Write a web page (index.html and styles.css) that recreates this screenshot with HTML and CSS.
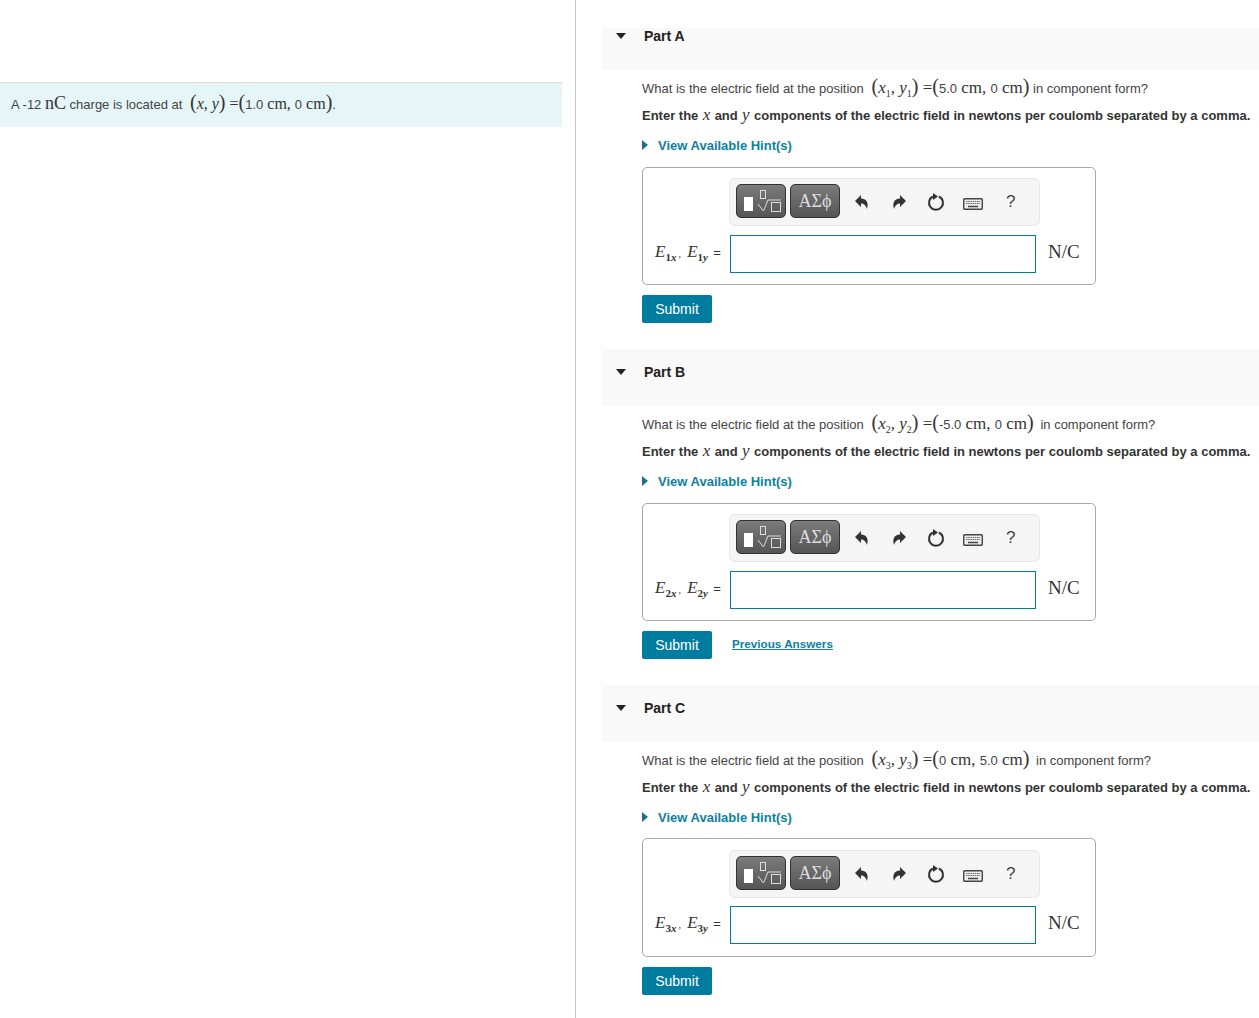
FILE: index.html
```html
<!DOCTYPE html>
<html lang="en">

<head>
  <meta charset="UTF-8">
  <title>Electric field of a point charge</title>
  <link rel="stylesheet" href="styles.css">
</head>

<body>
  <svg class="icon-defs" width="0" height="0">
    <symbol id="i-templates" viewBox="0 0 48 32">
      <rect x="7" y="12" width="9" height="14" fill="#fff"/>
      <rect x="23.500" y="5.500" width="5" height="8" fill="none" stroke="#ddd"/>
      <path d="M21 19l5.500 7 4.500-11h13" fill="none" stroke="#ddd"/>
      <rect x="34.500" y="17.500" width="9" height="9" fill="none" stroke="#ddd"/>
    </symbol>
    <symbol id="i-undo" viewBox="0 0 16 16">
      <path d="M1 7l6-6v3.500c5 0 8 3.500 6 10.500-1-3.500-3-5.500-6-5.500V13z" fill="#333"/>
    </symbol>
    <symbol id="i-redo" viewBox="0 0 16 16">
      <path d="M15 7L9 1v3.500c-5 0-8 3.500-6 10.500 1-3.500 3-5.500 6-5.500V13z" fill="#333"/>
    </symbol>
    <symbol id="i-reset" viewBox="0 0 20 20">
      <path d="M7 4.500a7 7 0 1 0 6 0" fill="none" stroke="#333" stroke-width="2"/>
      <path d="M7 1l5 3.500L7 8z" fill="#333"/>
    </symbol>
    <symbol id="i-keyboard" viewBox="0 0 20 12">
      <rect x=".7" y=".7" width="18.600" height="10.600" rx="1" fill="#eee" stroke="#444" stroke-width="1.400"/>
      <path d="M3 3.500h14M3 5.500h14" stroke="#666" stroke-dasharray="1.500 .7"/>
      <path d="M5 8.500h10" stroke="#444" stroke-width="1.500"/>
    </symbol>
  </svg>

  <div class="page">
    <div class="left">
      <div class="intro">A -12 <span class="math big">nC</span> charge is located at <span class="math gap"><span class="paren">(</span><i>x</i>, <i>y</i><span class="paren">)</span> =<span class="paren">(</span><span class="num">1.0</span> cm, <span class="num">0</span> cm<span class="paren">)</span></span>.</div>
    </div>

    <div class="right">
      <!-- Part A -->
      <div class="part-head first">
        <span class="caret"></span>
        <span class="part-title">Part A</span>
      </div>
      <div class="part-body">
        <p class="prompt">What is the electric field at the position <span class="math gap"><span class="paren">(</span><i>x</i><sub>1</sub>, <i>y</i><sub>1</sub><span class="paren">)</span> =<span class="paren">(</span><span class="num">5.0</span> cm, <span class="num">0</span> cm<span class="paren">)</span></span> in component form?</p>
        <p class="enter">Enter the <i class="math">x</i> and <i class="math">y</i> components of the electric field in newtons per coulomb separated by a comma.</p>
        <div class="hint"><span class="hint-arrow"></span>View Available Hint(s)</div>
        <div class="answer-box">
          <div class="toolbar">
            <button class="tool-btn"><svg width="48" height="32"><use href="#i-templates"/></svg></button>
            <button class="tool-btn greek">ΑΣϕ</button>
            <span class="tool-icon"><svg width="16" height="16"><use href="#i-undo"/></svg></span>
            <span class="tool-icon"><svg width="16" height="16"><use href="#i-redo"/></svg></span>
            <span class="tool-icon"><svg width="20" height="20"><use href="#i-reset"/></svg></span>
            <span class="tool-icon keyboard"><svg width="20" height="12"><use href="#i-keyboard"/></svg></span>
            <span class="tool-icon help">?</span>
          </div>
          <div class="answer-row">
            <span class="answer-label"><i>E</i><sub>1<i>x</i></sub><span class="comma">,</span> <i>E</i><sub>1<i>y</i></sub> <span class="eq">=</span></span>
            <input class="answer-input" type="text">
            <span class="unit">N/C</span>
          </div>
        </div>
        <div class="actions">
          <button class="submit">Submit</button>
        </div>
      </div>

      <!-- Part B -->
      <div class="part-head">
        <span class="caret"></span>
        <span class="part-title">Part B</span>
      </div>
      <div class="part-body">
        <p class="prompt">What is the electric field at the position <span class="math gap"><span class="paren">(</span><i>x</i><sub>2</sub>, <i>y</i><sub>2</sub><span class="paren">)</span> =<span class="paren">(</span><span class="num">-5.0</span> cm, <span class="num">0</span> cm<span class="paren">)</span></span> <span class="after">in component form?</span></p>
        <p class="enter">Enter the <i class="math">x</i> and <i class="math">y</i> components of the electric field in newtons per coulomb separated by a comma.</p>
        <div class="hint"><span class="hint-arrow"></span>View Available Hint(s)</div>
        <div class="answer-box">
          <div class="toolbar">
            <button class="tool-btn"><svg width="48" height="32"><use href="#i-templates"/></svg></button>
            <button class="tool-btn greek">ΑΣϕ</button>
            <span class="tool-icon"><svg width="16" height="16"><use href="#i-undo"/></svg></span>
            <span class="tool-icon"><svg width="16" height="16"><use href="#i-redo"/></svg></span>
            <span class="tool-icon"><svg width="20" height="20"><use href="#i-reset"/></svg></span>
            <span class="tool-icon keyboard"><svg width="20" height="12"><use href="#i-keyboard"/></svg></span>
            <span class="tool-icon help">?</span>
          </div>
          <div class="answer-row">
            <span class="answer-label"><i>E</i><sub>2<i>x</i></sub><span class="comma">,</span> <i>E</i><sub>2<i>y</i></sub> <span class="eq">=</span></span>
            <input class="answer-input" type="text">
            <span class="unit">N/C</span>
          </div>
        </div>
        <div class="actions">
          <button class="submit">Submit</button>
          <a class="prev-answers" href="#">Previous Answers</a>
        </div>
      </div>

      <!-- Part C -->
      <div class="part-head">
        <span class="caret"></span>
        <span class="part-title">Part C</span>
      </div>
      <div class="part-body">
        <p class="prompt">What is the electric field at the position <span class="math gap"><span class="paren">(</span><i>x</i><sub>3</sub>, <i>y</i><sub>3</sub><span class="paren">)</span> =<span class="paren">(</span><span class="num">0</span> cm, <span class="num">5.0</span> cm<span class="paren">)</span></span> <span class="after">in component form?</span></p>
        <p class="enter">Enter the <i class="math">x</i> and <i class="math">y</i> components of the electric field in newtons per coulomb separated by a comma.</p>
        <div class="hint"><span class="hint-arrow"></span>View Available Hint(s)</div>
        <div class="answer-box tall">
          <div class="toolbar">
            <button class="tool-btn"><svg width="48" height="32"><use href="#i-templates"/></svg></button>
            <button class="tool-btn greek">ΑΣϕ</button>
            <span class="tool-icon"><svg width="16" height="16"><use href="#i-undo"/></svg></span>
            <span class="tool-icon"><svg width="16" height="16"><use href="#i-redo"/></svg></span>
            <span class="tool-icon"><svg width="20" height="20"><use href="#i-reset"/></svg></span>
            <span class="tool-icon keyboard"><svg width="20" height="12"><use href="#i-keyboard"/></svg></span>
            <span class="tool-icon help">?</span>
          </div>
          <div class="answer-row">
            <span class="answer-label"><i>E</i><sub>3<i>x</i></sub><span class="comma">,</span> <i>E</i><sub>3<i>y</i></sub> <span class="eq">=</span></span>
            <input class="answer-input" type="text">
            <span class="unit">N/C</span>
          </div>
        </div>
        <div class="actions">
          <button class="submit">Submit</button>
        </div>
      </div>
    </div>
  </div>
</body>

</html>
```

FILE: styles.css
```css
* {
  box-sizing: border-box;
}

html,
body {
  margin: 0;
  height: 100%;
  overflow: hidden;
  background: #fff;
}

body {
  font-family: "Liberation Sans", Arial, sans-serif;
  font-size: 13px;
  color: #444;
}

.icon-defs {
  position: absolute;
}

.page {
  display: flex;
  height: 1018px;
}

.left {
  width: 576px;
  padding: 82px 13px 0 0;
  border-right: 1px solid #c8c8c8;
  flex-shrink: 0;
}

.intro {
  height: 45px;
  padding-left: 11px;
  line-height: 41px;
  white-space: nowrap;
  background: #e6f5f7;
  border-top: 1px solid #dcdcdc;
}

.intro .math.gap {
  font-size: 16px;
}

.right {
  flex: 1;
  padding: 28px 0 0 26px;
  min-width: 0;
}

.math {
  font-family: "Liberation Serif", "DejaVu Serif", serif;
  font-size: 17px;
  color: #333;
}

.math.big {
  font-size: 18px;
}

.math.gap {
  margin-left: 4px;
}

.math sub {
  font-size: 10px;
  line-height: 0;
}

.math .num {
  font-family: "Liberation Sans", Arial, sans-serif;
  font-size: 13px;
  color: #444;
}

.paren {
  font-size: 20px;
  line-height: 0;
}

.part-head {
  display: flex;
  height: 57px;
  padding: 14px 0 0 14px;
  background: #f9f9f9;
  margin-top: 26px;
}

.part-head.first {
  height: 42px;
  padding-top: 0;
  margin-top: 0;
}

.caret {
  width: 0;
  height: 0;
  margin-top: 6px;
  border-left: 5.5px solid transparent;
  border-right: 5.5px solid transparent;
  border-top: 6px solid #222;
}

.part-head.first .caret {
  margin-top: 5px;
}

.part-title {
  margin-left: 18px;
  font-size: 14px;
  font-weight: bold;
  color: #222;
  line-height: 18px;
}

.part-head.first .part-title {
  margin-top: -1px;
}

.part-body {
  padding-left: 40px;
}

.prompt {
  margin: 0;
  padding-top: 8px;
  height: 35px;
  line-height: 20px;
  white-space: nowrap;
}

.after {
  margin-left: 3px;
}

.enter {
  margin: 0;
  color: #333;
  font-weight: bold;
  line-height: 20px;
  height: 30px;
  white-space: nowrap;
}

.enter .math {
  margin: 0 .75px;
  font-weight: normal;
}

.hint {
  display: flex;
  align-items: center;
  height: 20px;
  font-weight: bold;
  color: #0e7fa0;
}

.hint-arrow {
  width: 0;
  height: 0;
  margin-right: 10px;
  border-top: 5px solid transparent;
  border-bottom: 5px solid transparent;
  border-left: 6px solid #1f6f8b;
}

.answer-box {
  width: 454px;
  height: 118px;
  margin-top: 12px;
  padding: 10px 0 0 86px;
  border: 1px solid #aaa;
  border-radius: 5px;
}

.answer-box.tall {
  height: 119px;
  margin-top: 11px;
  padding-top: 11px;
}

.toolbar {
  display: flex;
  align-items: center;
  width: 311px;
  height: 48px;
  padding-left: 6px;
  background: #f5f5f5;
  border: 1px solid #e6e6e6;
  border-radius: 6px;
}

.tool-btn {
  display: flex;
  align-items: center;
  justify-content: center;
  width: 50px;
  height: 34px;
  margin: 0 4px 2px 0;
  padding: 0;
  border: 1px solid #333;
  border-radius: 5px;
  background: linear-gradient(#7b7b7b, #555);
  color: #ddd;
}

.tool-btn.greek {
  margin-right: 3px;
  font-family: "Liberation Serif", serif;
  font-size: 18px;
}

.tool-icon {
  display: flex;
  align-items: center;
  justify-content: center;
  width: 37.25px;
}

.tool-icon.keyboard {
  padding-top: 4px;
}

.tool-icon.help {
  font-size: 17px;
  color: #444;
}

.answer-row {
  display: flex;
  align-items: center;
  margin: 9px 0 0 -86px;
}

.tall .answer-row {
  margin-top: 8px;
}

.answer-label {
  width: 87px;
  padding: 0 0 5px 12px;
  white-space: nowrap;
  font-family: "Liberation Serif", serif;
  font-size: 17px;
  color: #333;
}

.answer-label sub {
  font-size: 11px;
  font-weight: bold;
  line-height: 0;
}

.comma {
  margin: 0 2px;
  font-size: 10px;
}

.eq {
  margin-left: 1px;
  font-family: "Liberation Sans", Arial, sans-serif;
  font-size: 13px;
}

.answer-input {
  width: 306px;
  height: 38px;
  border: 1px solid #007c9e;
  background: #fff;
  outline: none;
}

.unit {
  margin-left: 12px;
  padding-bottom: 5px;
  font-family: "Liberation Serif", serif;
  font-size: 19px;
  color: #333;
}

.actions {
  display: flex;
  align-items: flex-start;
  height: 28px;
  margin-top: 10px;
}

.submit {
  width: 70px;
  height: 28px;
  padding: 0;
  border: none;
  border-radius: 2px;
  background: #007c9e;
  color: #fff;
  font-family: inherit;
  font-size: 14px;
}

.prev-answers {
  margin: 6px 0 0 20px;
  font-size: 11.700px;
  font-weight: bold;
  color: #0e7fa0;
}
```
